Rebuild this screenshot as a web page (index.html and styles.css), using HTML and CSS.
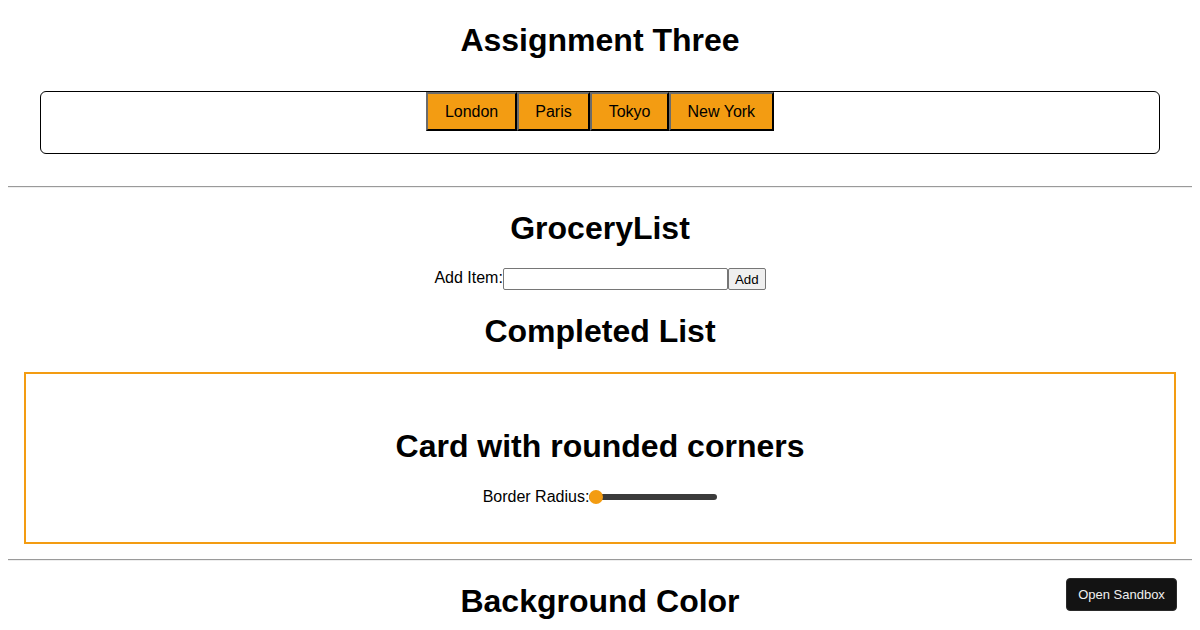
FILE: index.html
```html
<!DOCTYPE html>
<html>
<head>
<meta charset="utf-8">
<link rel="stylesheet" href="styles.css">
</head>
<body>
  <h1 class="title">Assignment Three</h1>
  <div class="tabs">
    <div class="tab-row">
      <button class="tab">London</button><button class="tab">Paris</button><button class="tab">Tokyo</button><button class="tab">New York</button>
    </div>
  </div>
  <hr class="rule">
  <h1 class="title">GroceryList</h1>
  <div class="add-row">
    <label class="add-label">Add Item:</label><input class="add-input" type="text"><button class="add-btn">Add</button>
  </div>
  <h1 class="title">Completed List</h1>
  <div class="card">
    <h1 class="title">Card with rounded corners</h1>
    <div class="radius-row">
      <label class="radius-label">Border Radius:</label><input class="slider" type="range" min="0" max="50" value="0">
    </div>
  </div>
  <hr class="rule">
  <h1 class="title">Background Color</h1>
  <button class="sandbox">Open Sandbox</button>
</body>
</html>
```

FILE: styles.css
```css
html, body {
  background: #ffffff;
}
body {
  margin: 1px 8px 8px;
  font-family: "Liberation Sans", Arial, sans-serif;
  font-size: 16px;
  color: #000;
}
.title {
  font-size: 32px;
  font-weight: bold;
  text-align: center;
  margin: 21.44px 0;
}
.tabs {
  margin: 32px;
  border: 1px solid #000;
  border-radius: 6px;
  padding-bottom: 22px;
}
.tab-row {
  display: flex;
  justify-content: center;
}
.tab {
  font-family: "Liberation Sans", Arial, sans-serif;
  font-size: 16px;
  background: #f39c12;
  color: #000;
  border: 2px outset #767676;
  border-color: #6b6b6b #2a2a2a #2a2a2a #6b6b6b;
  padding: 8px 16.5px;
  margin: 0;
  line-height: 19px;
}
.rule {
  margin: 8px 0;
  border: none;
  border-top: 1px solid #9a9a9a;
  border-bottom: 1px solid #eeeeee;
  height: 0;
}
.add-row {
  display: flex;
  justify-content: center;
  align-items: flex-start;
  height: 23px;
}
.add-label {
  font-size: 16px;
  line-height: 20px;
}
.add-input {
  box-sizing: border-box;
  width: 225px;
  height: 22px;
  margin: 0;
  border: 1px solid #767676;
  border-radius: 2px;
  padding: 1px 2px;
}
.add-btn {
  font-family: "Liberation Sans", Arial, sans-serif;
  font-size: 13.33px;
  height: 22px;
  margin: 0;
  padding: 1px 6px;
  background: #efefef;
  border: 1px solid #767676;
  border-radius: 2px;
  color: #000;
}
.card {
  margin: 22.5px 16px 15px;
  border: 2px solid #f39c12;
  padding: 32px;
  border-radius: 0;
}
.radius-row {
  display: flex;
  justify-content: center;
  align-items: center;
  height: 21px;
  margin-bottom: 3px;
}
.radius-label {
  font-size: 16px;
}
.slider {
  -webkit-appearance: none;
  appearance: none;
  width: 128px;
  height: 6px;
  margin: 0;
  background: #3b3b3b;
  border-radius: 3px;
  outline: none;
}
.slider::-webkit-slider-thumb {
  -webkit-appearance: none;
  appearance: none;
  width: 14px;
  height: 14px;
  border-radius: 50%;
  background: #f39c12;
  border: none;
}
.sandbox {
  position: fixed;
  right: 23px;
  bottom: 19px;
  width: 111px;
  height: 33px;
  background: #131313;
  color: #f0f0f0;
  border: 1px solid #2a2a2a;
  border-radius: 4px;
  font-family: "Liberation Sans", Arial, sans-serif;
  font-size: 13px;
  padding: 0;
}
```
